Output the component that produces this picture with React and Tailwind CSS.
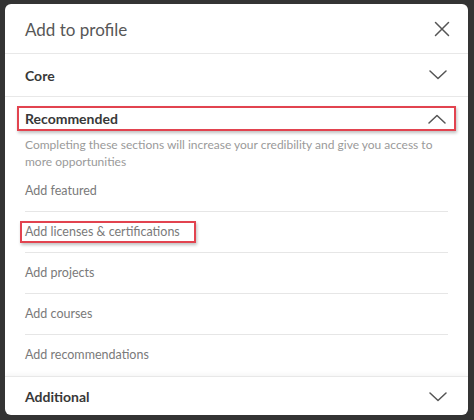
import React from "react";

const Chevron = ({ up }) => (
  <svg width="18" height="10" viewBox="0 0 18 10" fill="none" stroke="#555" strokeWidth="1.5" strokeLinecap="round" strokeLinejoin="round">
    {up ? <path d="M1 9 L9 1.5 L17 9" /> : <path d="M1 1 L9 8.5 L17 1" />}
  </svg>
);

const Item = ({ children, boxed, last }) => (
  <div className={"mx-5 flex h-[41px] items-center " + (last ? "" : "border-b border-[#e6e6e6]")}>
    {boxed ? (
      <div className="-ml-[5px] flex h-[22px] items-center border-2 border-[#e2434f] pl-[3px] pr-[14px] shadow-[1px_2px_3px_rgba(0,0,0,0.25)]">
        {children}
      </div>
    ) : (
      children
    )}
  </div>
);

export default function App() {
  return (
    <div
      className="h-[420px] w-[474px] overflow-hidden bg-[#343434] pl-[5px] pt-[4px]"
      style={{ fontFamily: 'Lato, "Open Sans", sans-serif' }}
    >
      <div className="flex h-[411px] w-[463px] flex-col overflow-hidden rounded-[6px] bg-white">
        <div className="flex h-[50px] shrink-0 items-center justify-between border-b border-[#e8e8e8] pl-5 pr-[18px]">
          <span className="mt-[2px] text-[17px] text-[#575757]">Add to profile</span>
          <svg width="16" height="16" viewBox="0 0 16 16" stroke="#555" strokeWidth="1.5" strokeLinecap="round">
            <path d="M1.5 1.5 L14.5 14.5 M14.5 1.5 L1.5 14.5" />
          </svg>
        </div>
        <div className="flex h-[43px] shrink-0 items-center justify-between border-b border-[#e8e8e8] pl-5 pr-[21px]">
          <span className="text-[14px] font-bold text-[#383838]">Core</span>
          <Chevron />
        </div>
        <div className="mx-3 mt-[9px] flex h-[25px] shrink-0 items-center justify-between border-2 border-[#e2434f] pl-[6px] pr-[8px] shadow-[1px_2px_3px_rgba(0,0,0,0.25)]">
          <span className="text-[14px] font-bold text-[#383838]">Recommended</span>
          <Chevron up />
        </div>
        <div className="mx-5 mt-[5px] text-[12px] leading-[17px] text-[#9a9a9a]">
          Completing these sections will increase your credibility and give you access to more opportunities
        </div>
        <div className="text-[12.5px] text-[#7a7a7a]">
          <div className="mt-[1px]">
            <Item>Add featured</Item>
          </div>
          <Item boxed>Add licenses &amp; certifications</Item>
          <Item>Add projects</Item>
          <Item>Add courses</Item>
          <Item last>Add recommendations</Item>
        </div>
        <div className="flex h-[40px] shrink-0 items-center justify-between border-t border-[#e8e8e8] pl-5 pr-[21px] shadow-[0_-2px_4px_rgba(0,0,0,0.04)]">
          <span className="text-[14px] font-bold text-[#383838]">Additional</span>
          <Chevron />
        </div>
      </div>
    </div>
  );
}
